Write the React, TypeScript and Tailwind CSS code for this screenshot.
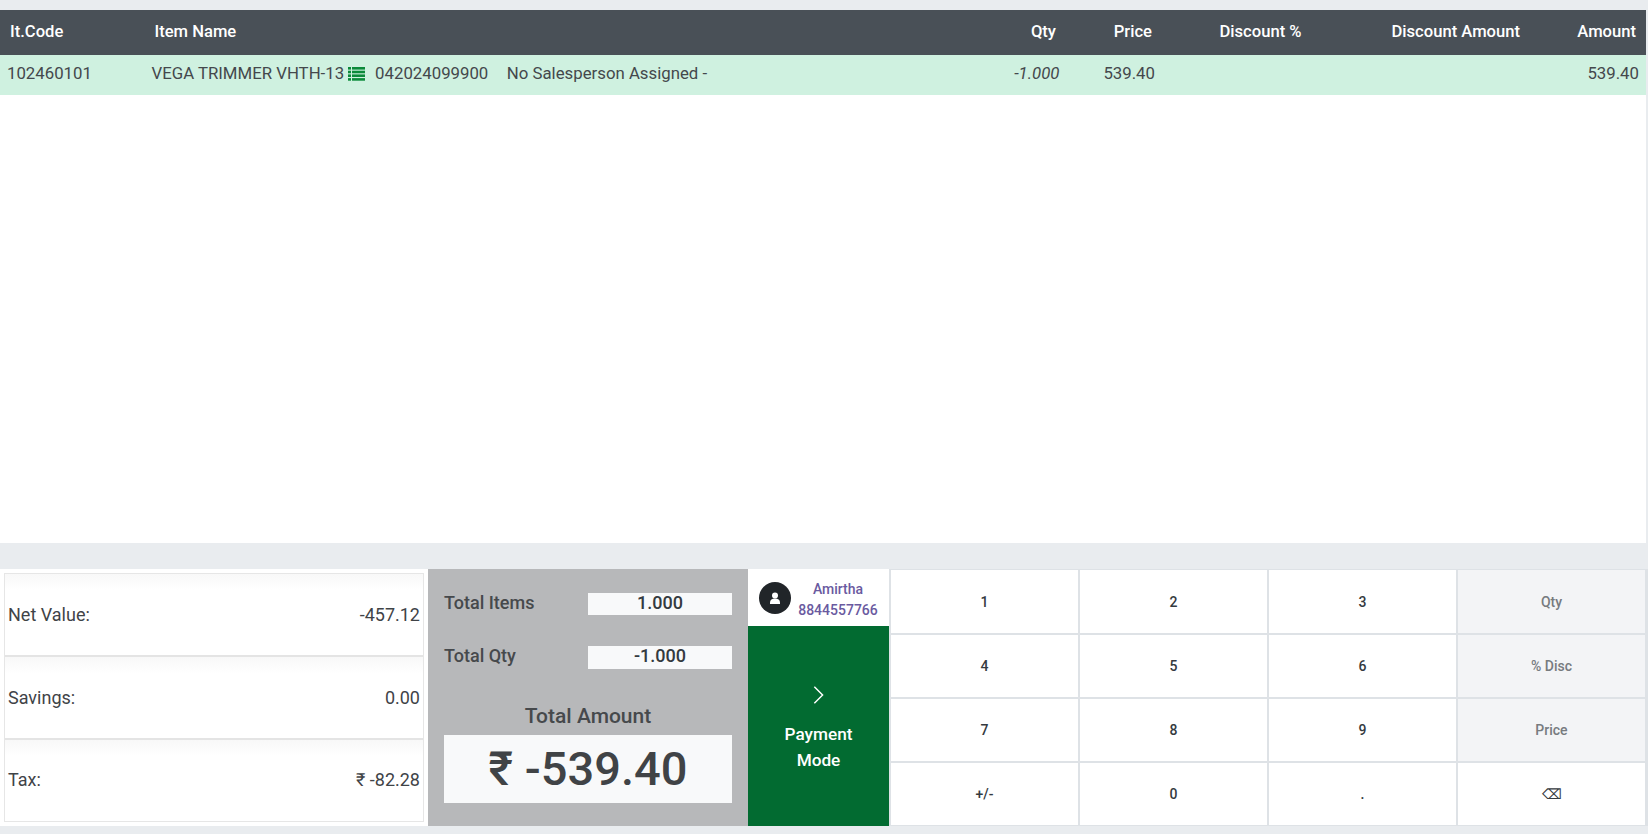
const font = "font-['Roboto',sans-serif]";

const keys = [
  { label: "1" }, { label: "2" }, { label: "3" }, { label: "Qty", side: true },
  { label: "4" }, { label: "5" }, { label: "6" }, { label: "% Disc", side: true },
  { label: "7" }, { label: "8" }, { label: "9" }, { label: "Price", side: true },
  { label: "+/-" }, { label: "0" }, { label: "." }, { label: "⌫" },
];

function SummaryRow({ label, value, className }: { label: string; value: string; className: string }) {
  return (
    <div className={"flex items-center justify-between pl-[3px] pr-[3px] text-[18px] text-[#3f4347] bg-gradient-to-b from-[#f8f8f8] to-white to-[20%] " + className}>
      <span>{label}</span>
      <span>{value}</span>
    </div>
  );
}

function TotalLine({ label, value, h, labelPad, pad }: { label: string; value: string; h: string; labelPad: string; pad: string }) {
  return (
    <div className={"flex items-center justify-between " + h}>
      <span className={"text-[18px] font-medium text-[#46494c] " + labelPad}>{label}</span>
      <span className={"flex h-full w-[144px] items-center justify-center bg-[#f8f9fa] text-[18px] font-medium text-[#343a40] " + pad}>{value}</span>
    </div>
  );
}

export default function App() {
  return (
    <div className={font + " flex h-[834px] w-[1648px] flex-col overflow-hidden bg-[#e9ecef] pt-[10px]"}>
      <div className="mr-[2px] flex h-[533px] flex-col bg-white">
        <div className="flex h-[45px] items-center bg-[#495057] text-[16.6px] font-medium text-white">
          <span className="ml-[10px] w-[144.5px]">It.Code</span>
          <span className="flex-1">Item Name</span>
          <span className="w-[40px] text-right">Qty</span>
          <span className="w-[96px] text-right">Price</span>
          <span className="w-[149.5px] text-right">Discount %</span>
          <span className="w-[218.5px] text-right">Discount Amount</span>
          <span className="w-[126px] pr-[10px] text-right">Amount</span>
        </div>
        <div className="flex h-[40px] items-center bg-[#cff1e0] pb-[2px] text-[16.8px] text-[#44484c]">
          <span className="ml-[7px] w-[144.5px]">102460101</span>
          <span>VEGA TRIMMER VHTH-13</span>
          <svg className="ml-[4px] mr-[10px] h-[14px] w-[17px]" viewBox="0 0 17 14" fill="#0b8a3a">
            <rect x="0" y="0" width="3" height="2.6" />
            <rect x="4" y="0" width="13" height="2.6" />
            <rect x="0" y="3.7" width="3" height="2.6" />
            <rect x="4" y="3.7" width="13" height="2.6" />
            <rect x="0" y="7.4" width="3" height="2.6" />
            <rect x="4" y="7.4" width="13" height="2.6" />
            <rect x="0" y="11.1" width="3" height="2.6" />
            <rect x="4" y="11.1" width="13" height="2.6" />
          </svg>
          <span>042024099900</span>
          <span className="ml-[18.5px] flex-1">No Salesperson Assigned -</span>
          <span className="w-[48px] text-right italic">-1.000</span>
          <span className="w-[95.5px] text-right">539.40</span>
          <span className="w-[491px] pr-[7px] text-right">539.40</span>
        </div>
      </div>
      <div className="mt-[26px] flex h-[257px]">
        <div className="w-[428px] bg-white p-[4px]">
          <div className="flex h-full flex-col border border-[#e6e6e6]">
            <SummaryRow label="Net Value:" value="-457.12" className="h-[83px] border-b-2 border-[#e4e4e4]" />
            <SummaryRow label="Savings:" value="0.00" className="h-[83px] border-b-2 border-[#e4e4e4]" />
            <SummaryRow label="Tax:" value="₹ -82.28" className="flex-1 pb-[2px]" />
          </div>
        </div>
        <div className="flex w-[320px] flex-col bg-[#b7b8ba] px-[16px] pt-[24px]">
          <TotalLine label="Total Items" value="1.000" h="h-[22px]" labelPad="pb-[3px]" pad="pb-[3px]" />
          <div className="mt-[31px]">
            <TotalLine label="Total Qty" value="-1.000" h="h-[23px]" labelPad="pb-[5px]" pad="pb-[4px]" />
          </div>
          <div className="mt-[33px] text-center text-[21px] font-medium leading-[28px] text-[#46494c]">Total Amount</div>
          <div className="mt-[5px] flex h-[68px] items-center justify-center bg-[#f8f9fa] text-[47px] font-medium text-[#404346]">₹ -539.40</div>
        </div>
        <div className="flex w-[141px] flex-col">
          <div className="flex h-[57px] items-center bg-white pl-[11px]">
            <div className="flex h-[32px] w-[32px] items-center justify-center rounded-full bg-[#212529]">
              <svg className="h-[12px] w-[12px]" viewBox="0 0 24 24" fill="white">
                <circle cx="12" cy="7" r="6" />
                <path d="M2 24v-3c0-5 4-8 10-8s10 3 10 8v3z" />
              </svg>
            </div>
            <div className="flex-1 pr-[4px] pt-[4px] text-center text-[14px] font-medium leading-[21px] text-[#6a5a9f]">
              <div>Amirtha</div>
              <div>8844557766</div>
            </div>
          </div>
          <div className="flex flex-1 flex-col items-center justify-center bg-[#026b31] pt-[5px] text-white">
            <svg className="mb-[15px] mr-[2px] h-[22px] w-[22px]" viewBox="0 0 24 24" fill="none" stroke="white" strokeWidth="1.6">
              <path d="M8 3l9 9-9 9" />
            </svg>
            <div className="text-center text-[17.2px] font-medium leading-[26px]">Payment<br />Mode</div>
          </div>
        </div>
        <div className="grid flex-1 grid-cols-[repeat(4,187px)] grid-rows-[63px_62px_62px_62px] gap-[2px] bg-[#dee2e6] py-[1px] pl-[2px]">
          {keys.map((k) => (
            <div
              key={k.label}
              className={"flex items-center justify-center pt-[1px] text-[14px] font-medium " + (k.side ? "bg-[#f3f4f6] text-[#777b7f]" : "bg-white text-[#343a40]")}
            >
              {k.label}
            </div>
          ))}
        </div>
      </div>
    </div>
  );
}
